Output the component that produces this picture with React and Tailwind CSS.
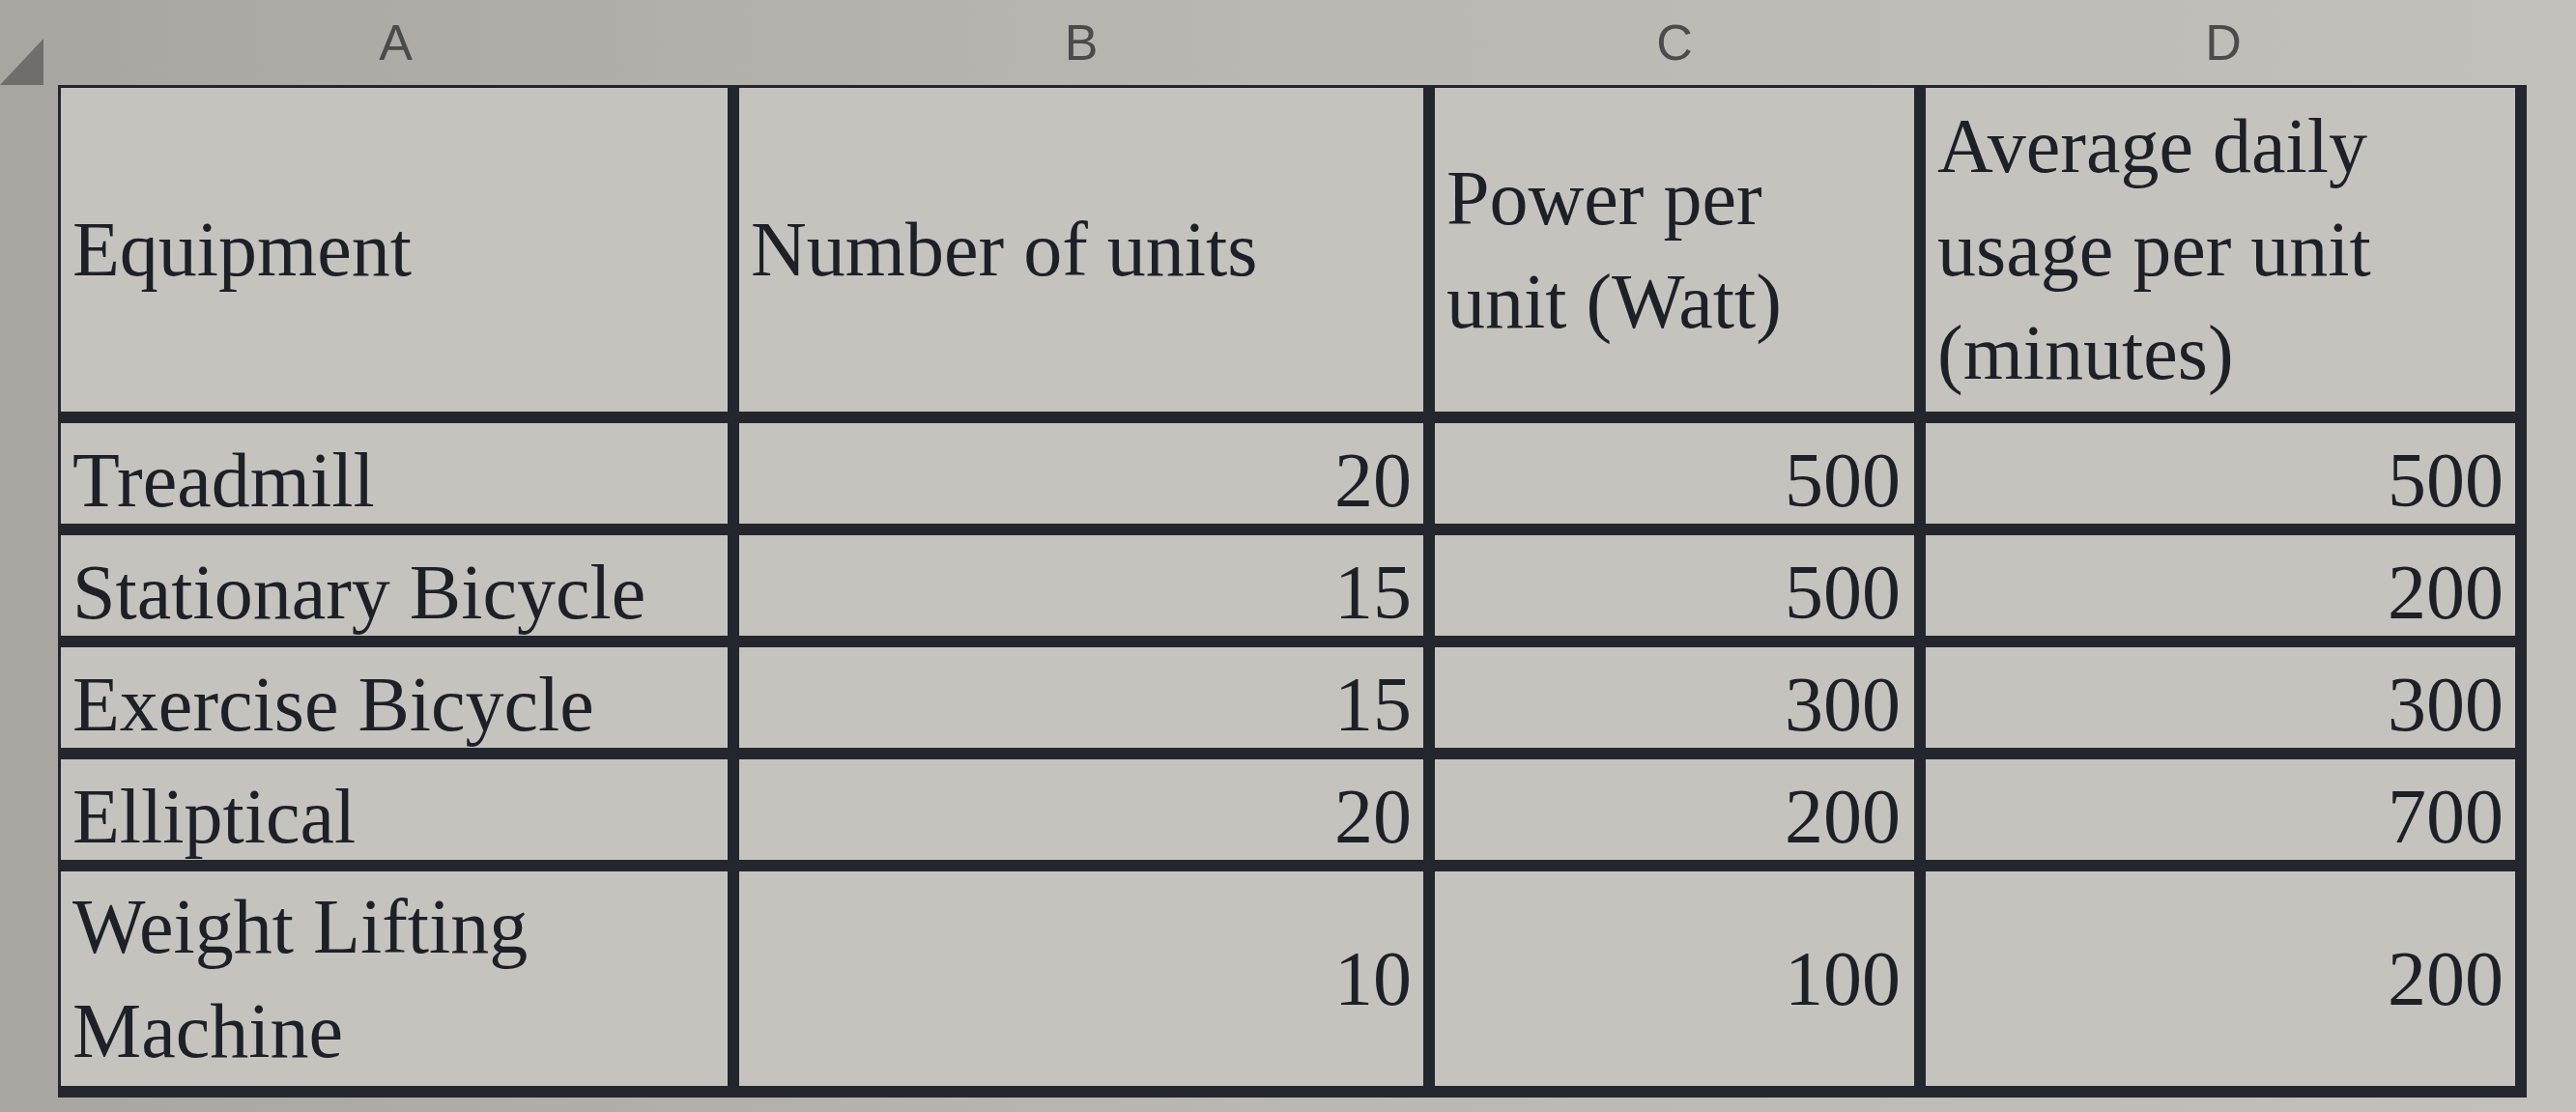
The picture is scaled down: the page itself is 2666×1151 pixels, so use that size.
const rows = [
  { name: "Treadmill", units: 20, power: 500, usage: 500 },
  { name: "Stationary Bicycle", units: 15, power: 500, usage: 200 },
  { name: "Exercise Bicycle", units: 15, power: 300, usage: 300 },
  { name: "Elliptical", units: 20, power: 200, usage: 700 },
];

const Cell = ({ children, className = "" }) => (
  <div className={`bg-[#c4c3be] flex ${className}`}>{children}</div>
);

const App = () => {
  return (
    <div className="w-[2666px] h-[1151px] overflow-hidden bg-gradient-to-r from-[#a7a6a1] via-[#b9b8b3] to-[#c1c0bb] text-[#1d2027] font-['Liberation_Serif',serif]">
      {/* column letters */}
      <div className="flex h-[88px] text-[#4b4b4b] font-['Liberation_Sans',sans-serif] text-[52px] leading-none">
        <div className="w-[60px] flex items-end">
          <svg width="45" height="48" viewBox="0 0 45 48">
            <polygon points="0,48 45,48 45,0" fill="#6f6e6a" />
          </svg>
        </div>
        <div className="w-[699px] flex items-center justify-center">A</div>
        <div className="w-[720px] flex items-center justify-center">B</div>
        <div className="w-[508px] flex items-center justify-center">C</div>
        <div className="w-[628px] flex items-center justify-center">D</div>
      </div>

      {/* sheet */}
      <div className="ml-[60px] w-[2555px] grid grid-cols-[690px_708px_496px_610px] grid-rows-[335px_104px_104px_104px_104px_222px] gap-[12px] bg-[#23262d] pt-[3px] pl-[3px] pr-[12px] pb-[12px] text-[80px]">
        <Cell className="items-center pl-[12px] leading-[107px]">Equipment</Cell>
        <Cell className="items-center pl-[12px] leading-[107px]">Number of units</Cell>
        <Cell className="items-center pl-[12px] leading-[107px]">
          <div>
            Power per
            <br />
            unit (Watt)
          </div>
        </Cell>
        <Cell className="items-center pl-[12px] leading-[107px]">
          <div>
            Average daily
            <br />
            usage per unit
            <br />
            (minutes)
          </div>
        </Cell>

        {rows.map((r) => (
          <div key={r.name} className="contents">
            <Cell className="items-end pl-[12px] leading-[90px]">{r.name}</Cell>
            <Cell className="items-end justify-end pr-[12px] leading-[90px]">{r.units}</Cell>
            <Cell className="items-end justify-end pr-[14px] leading-[90px]">{r.power}</Cell>
            <Cell className="items-end justify-end pr-[12px] leading-[90px]">{r.usage}</Cell>
          </div>
        ))}

        <Cell className="items-center pl-[12px] leading-[108px]">
          <div>
            Weight Lifting
            <br />
            Machine
          </div>
        </Cell>
        <Cell className="items-center justify-end pr-[12px] leading-[108px]">10</Cell>
        <Cell className="items-center justify-end pr-[14px] leading-[108px]">100</Cell>
        <Cell className="items-center justify-end pr-[12px] leading-[108px]">200</Cell>
      </div>
    </div>
  );
};

export default App;
